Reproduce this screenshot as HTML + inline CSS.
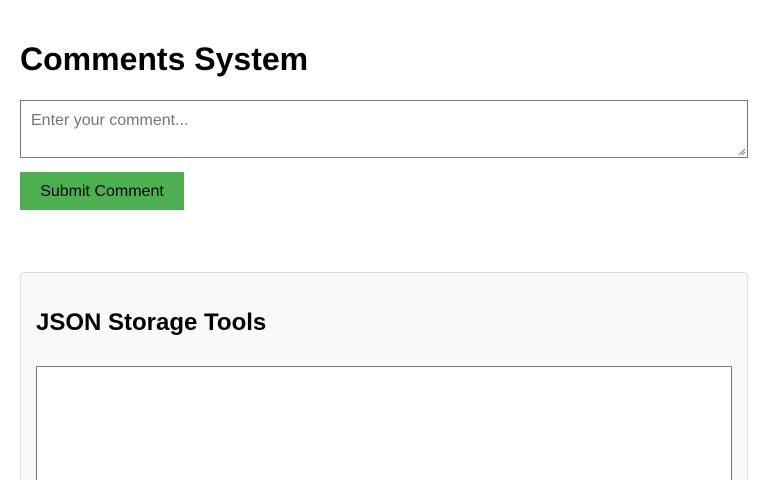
<!DOCTYPE html>
<html><head><style>
html,body{margin:0;padding:0;background:#fff;width:768px;height:480px;overflow:hidden;}
body{font-family:"Liberation Sans",Arial,sans-serif;position:relative;}
h1{position:absolute;left:20px;top:40px;margin:0;font-size:32px;font-weight:bold;line-height:38px;color:#000;}
.ta{position:absolute;left:20px;top:100px;width:728px;height:58px;box-sizing:border-box;border:1px solid #767676;background:#fff;}
.ph{position:absolute;left:10px;top:11px;font-size:16px;color:#757575;}
.grip{position:absolute;right:1px;bottom:1px;width:8px;height:8px;}
.btn{position:absolute;left:20px;top:172px;width:164px;height:38px;background:#4CAF50;color:#000;font-size:16px;line-height:39px;text-align:center;}
.box{position:absolute;left:20px;top:272px;width:728px;height:208px;box-sizing:border-box;border:1px solid #ddd;border-bottom:none;border-radius:4px 4px 0 0;background:#f9f9f9;}
h2{position:absolute;left:15px;top:36px;margin:0;font-size:24px;font-weight:bold;line-height:28px;}
.ta2{position:absolute;left:15px;top:93px;width:696px;height:120px;box-sizing:border-box;border:1px solid #767676;border-bottom:none;background:#fff;}
</style></head><body>
<h1>Comments System</h1>
<div class="ta"><span class="ph">Enter your comment...</span>
<svg class="grip" viewBox="0 0 8 8"><path d="M7 1L1 7M7 4L4 7" stroke="#777" stroke-width="1"/></svg></div>
<div class="btn">Submit Comment</div>
<div class="box"><h2>JSON Storage Tools</h2><div class="ta2"></div></div>
</body></html>
